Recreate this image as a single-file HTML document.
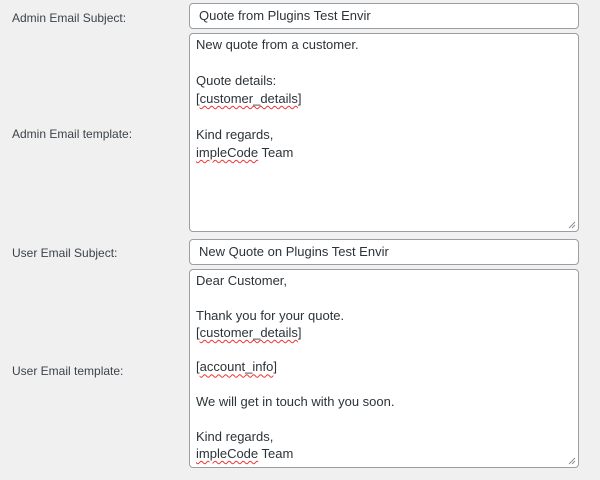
<!DOCTYPE html>
<html><head><meta charset="utf-8"><style>
body{margin:0;width:600px;height:480px;background:#f0f0f1;font-family:"Liberation Sans",sans-serif;color:#3c434a;position:relative;overflow:hidden}
.l{position:absolute;left:12px;font-size:12px;color:#3c434a}
.box{position:absolute;left:189px;width:390px;background:#fff;border:1px solid #9a9da2;border-radius:4px;box-sizing:border-box;font-size:13px;color:#2c3338;line-height:18px;padding:0 6px}
.sq{text-decoration:underline wavy #e33;text-decoration-thickness:1px;text-underline-offset:2px}
.rz{position:absolute;right:2px;bottom:2px}
</style></head><body>
<div class="l" style="top:11px">Admin Email Subject:</div>
<div class="box" style="top:3px;height:26px;line-height:24px;padding-left:9px">Quote from Plugins Test Envir</div>
<div class="l" style="top:127px">Admin Email template:</div>
<div class="box" style="top:33px;height:199px;padding-top:2px">New quote from a customer.<br><br>Quote details:<br>[<span class="sq">customer_details</span>]<br><br>Kind regards,<br><span class="sq">impleCode</span> Team
<svg class="rz" width="8" height="8"><path d="M1 7L7 1M4 7L7 4" stroke="#8c8f94" stroke-width="1"/></svg></div>
<div class="l" style="top:246px">User Email Subject:</div>
<div class="box" style="top:239px;height:26px;line-height:24px;padding-left:9px">New Quote on Plugins Test Envir</div>
<div class="l" style="top:364px">User Email template:</div>
<div class="box" style="top:269px;height:199px;padding-top:2px;line-height:17.3px">Dear Customer,<br><br>Thank you for your quote.<br>[<span class="sq">customer_details</span>]<br><br>[<span class="sq">account_info</span>]<br><br>We will get in touch with you soon.<br><br>Kind regards,<br><span class="sq">impleCode</span> Team
<svg class="rz" width="8" height="8"><path d="M1 7L7 1M4 7L7 4" stroke="#8c8f94" stroke-width="1"/></svg></div>
</body></html>
